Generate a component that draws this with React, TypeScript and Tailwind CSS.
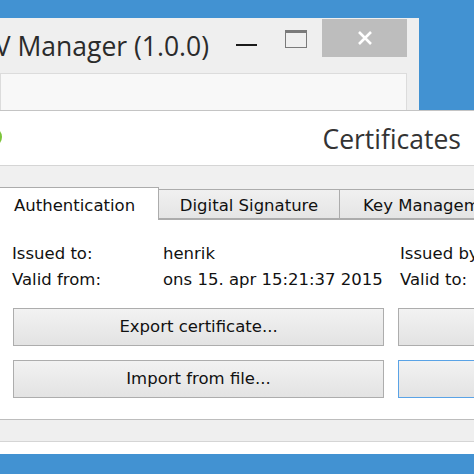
import React from 'react';

const ui = { fontFamily: '"DejaVu Sans", Tahoma, sans-serif' };
const seg = { fontFamily: '"Open Sans", "Noto Sans", sans-serif' };

function Btn({ label, focused }: { label?: string; focused?: boolean }) {
  return (
    <div
      className={`flex h-[38px] items-center justify-center border bg-gradient-to-b from-[#f2f2f2] to-[#e3e3e3] text-[16.5px] text-[#111] ${
        focused ? 'border-[#5aa3e6]' : 'border-[#adadad]'
      }`}
    >
      {label}
    </div>
  );
}

function BackWindow() {
  return (
    <div className="absolute left-0 top-[18px] flex h-[100px] w-[419px] flex-col bg-[#efefef]">
      <div className="flex h-[55px] items-start">
        <div className="relative h-full w-[225px] overflow-hidden">
          <span
            className="absolute right-[16px] top-[9px] whitespace-nowrap text-[26.5px] text-[#2b2b2b]"
            style={seg}
          >
            PIV Manager (1.0.0)
          </span>
        </div>
        {/* minimize */}
        <div className="ml-[11px] mt-[26px] h-[2px] w-[21px] bg-[#1a1a1a]" />
        {/* maximize */}
        <div className="ml-[28px] mt-[12px] h-[18px] w-[22px] border border-t-[3px] border-[#7a7a7a]" />
        {/* close */}
        <div className="ml-[15px] mt-[1px] flex h-[38px] w-[85px] items-center justify-center bg-[#bdbdbd]">
          <svg width="16" height="16" viewBox="0 0 16 16">
            <path d="M2 2 L14 14 M14 2 L2 14" stroke="#fff" strokeWidth="2.6" />
          </svg>
        </div>
      </div>
      <div className="mr-[12px] h-[38px] border border-[#dcdcdc] bg-[#f8f8f8]" />
    </div>
  );
}

function FrontWindow() {
  return (
    <div
      className="absolute left-[-8px] top-[110px] flex h-[344px] w-[540px] flex-col border-t border-[#c4c4c4] bg-white"
      style={ui}
    >
      {/* header */}
      <div className="relative flex h-[54px] items-center justify-end pr-[71px]">
        <div className="absolute left-[-10px] top-[16px] h-[20px] w-[20px] rounded-full bg-[#7cc43a]" />
        <span className="mt-[3px] text-[26.5px] text-[#333]" style={seg}>
          Certificates
        </span>
      </div>
      <div className="flex h-[54px] flex-col border-t border-[#d5d5d5] bg-[#f0f0f0]">
        <div className="flex-1" />
        <div className="flex h-[33px] items-end">
          <div className="relative z-10 mb-[-1px] flex h-[33px] w-[167px] items-start border border-b-0 border-[#acacac] bg-white pl-[21px] pt-[6px] text-[16.5px] text-[#111]">
            Authentication
          </div>
          <div className="flex h-[30px] w-[181px] items-start justify-center border border-l-0 border-[#acacac] bg-gradient-to-b from-[#f0f0f0] to-[#e5e5e5] pt-[4px] text-[16.5px] text-[#111]">
            Digital Signature
          </div>
          <div className="flex h-[30px] w-[180px] items-start border border-l-0 border-[#acacac] bg-gradient-to-b from-[#f0f0f0] to-[#e5e5e5] pl-[23px] pt-[4px] text-[16.5px] text-[#111]">
            Key Management
          </div>
        </div>
      </div>
      {/* pane */}
      <div className="flex h-[200px] flex-col border-t border-[#acacac] px-[20px] pt-[21px] text-[16.5px] text-[#111]">
        <div className="grid grid-cols-[151px_237px_1fr] leading-[26px]">
          <span>Issued to:</span>
          <span>henrik</span>
          <span>Issued by:</span>
          <span>Valid from:</span>
          <span className="whitespace-nowrap">ons 15. apr 15:21:37 2015</span>
          <span>Valid to:</span>
        </div>
        <div className="mt-[15px] grid grid-cols-[371px_371px] gap-x-[14px] gap-y-[14px] pl-[1px]">
          <Btn label="Export certificate..." />
          <Btn />
          <Btn label="Import from file..." />
          <Btn focused />
        </div>
      </div>
      <div className="h-[23px] border-t border-b border-[#bdbdbd] border-b-[#d5d5d5] bg-[#efefef]" />
      <div className="flex-1 bg-white" />
    </div>
  );
}

export default function App() {
  return (
    <div className="relative h-[474px] w-[474px] overflow-hidden bg-[#4292d2]">
      <BackWindow />
      <FrontWindow />
    </div>
  );
}
